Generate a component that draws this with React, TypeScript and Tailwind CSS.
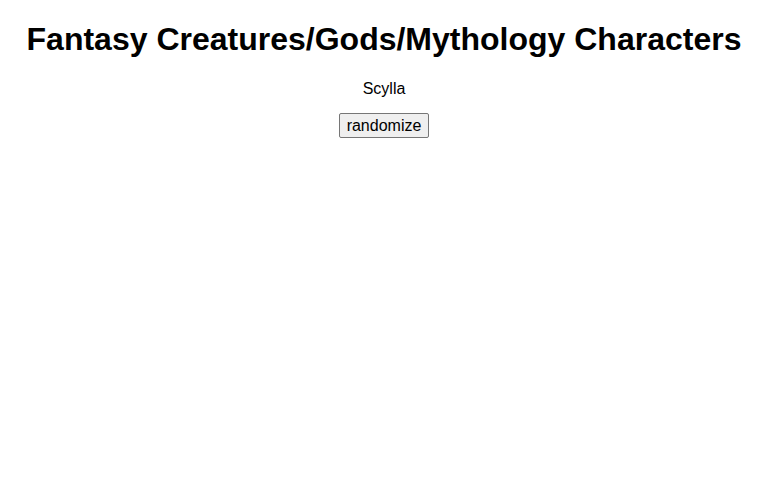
export default function App() {
  return (
    <div className="text-center text-black bg-white min-h-[480px]" style={{ fontFamily: '"Liberation Sans", Arial, sans-serif' }}>
      <h1 className="text-[32px] font-bold leading-[37px] pt-[21px] m-0">Fantasy Creatures/Gods/Mythology Characters</h1>
      <p className="text-[16px] leading-[18px] mt-[22px] mb-[15px]">Scylla</p>
      <button className="text-[16px] leading-[19px] px-[7px] py-[2px] bg-[#efefef] border border-[#767676] rounded-[2px] text-black">randomize</button>
    </div>
  );
}
